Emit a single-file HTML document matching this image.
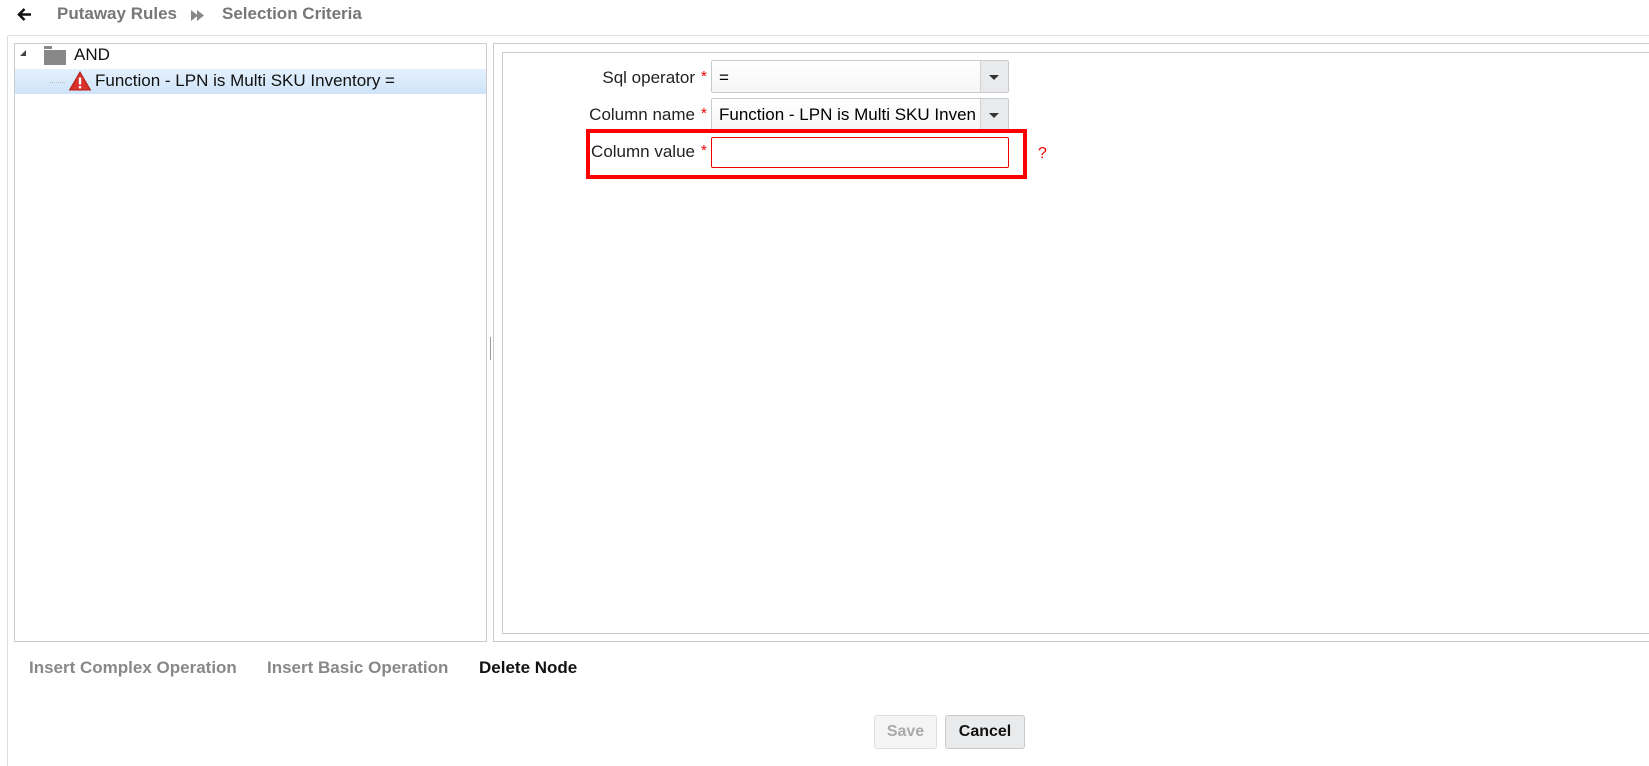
<!DOCTYPE html>
<html><head><style>
body{margin:0;width:1649px;height:764px;background:#fff;font-family:"Liberation Sans",sans-serif;position:relative;overflow:hidden}
.a{position:absolute}
.lbl{font-size:17px;color:#222;text-align:right;width:250px}
.st{color:#e00;font-size:15px}
.sel{border:1px solid #c8ccd0;border-radius:2px;background:linear-gradient(#fff,#f6f6f6);box-sizing:border-box}
.dd{position:absolute;right:0;top:0;bottom:0;width:27px;background:#e8eaec;border-left:1px solid #cfd2d5}
.dd:after{content:"";position:absolute;left:8px;top:14px;border:5px solid transparent;border-top:5px solid #333;border-bottom:0}
</style></head><body>
<div class="a" style="left:7px;top:36px;width:1px;height:730px;background:#ddd"></div>
<div class="a" style="left:8px;top:35px;width:1641px;height:1px;background:#ddd"></div>
<svg class="a" style="left:16px;top:6px" width="17" height="17"><path d="M15 8.5H3M8.5 3L3 8.5l5.5 5.5" stroke="#111" stroke-width="2.6" fill="none"/></svg>
<div class="a" style="left:57px;top:4px;font-size:17px;font-weight:bold;color:#777">Putaway Rules</div>
<svg class="a" style="left:190px;top:9px" width="15" height="13"><path d="M1 1l7 5.5-7 5.5zM7 1l7 5.5-7 5.5z" fill="#888"/></svg>
<div class="a" style="left:222px;top:4px;font-size:17px;font-weight:bold;color:#777">Selection Criteria</div>

<div class="a" style="left:14px;top:43px;width:471px;height:597px;border:1px solid #ccc"></div>
<svg class="a" style="left:19px;top:49px" width="8" height="8"><path d="M7 1V7H1z" fill="#444"/></svg>
<svg class="a" style="left:44px;top:45px" width="22" height="20"><path d="M0 1h8v3H0z" fill="#888"/><path d="M0 5h22v15H0z" fill="#888"/></svg>
<div class="a" style="left:74px;top:45px;font-size:17px;color:#111">AND</div>
<div class="a" style="left:15px;top:69px;width:471px;height:25px;background:linear-gradient(#e4f0fc,#cfe4f9)"></div>
<div class="a" style="left:50px;top:82px;width:15px;border-top:1px dotted #bbb"></div>
<svg class="a" style="left:69px;top:71px" width="22" height="20"><path d="M11 1L21.5 19H0.5z" fill="#d9322a" stroke="#b02018"/><path d="M11 6.5v7" stroke="#fff" stroke-width="2.4"/><circle cx="11" cy="16.2" r="1.3" fill="#fff"/></svg>
<div class="a" style="left:95px;top:71px;font-size:17px;color:#111;white-space:nowrap">Function - LPN is Multi SKU Inventory =</div>

<div class="a" style="left:490px;top:337px;width:1px;height:23px;background:#999"></div>
<div class="a" style="left:493px;top:43px;width:1190px;height:597px;border:1px solid #ccc"></div>
<div class="a" style="left:502px;top:52px;width:1180px;height:580px;border:1px solid #ccc"></div>

<div class="a lbl" style="left:445px;top:68px">Sql operator</div><div class="a st" style="left:701px;top:68px">*</div>
<div class="a sel" style="left:711px;top:60px;width:298px;height:33px"><span class="a" style="left:7px;top:7px;font-size:17px">=</span><div class="dd"></div></div>
<div class="a lbl" style="left:445px;top:105px">Column name</div><div class="a st" style="left:701px;top:105px">*</div>
<div class="a sel" style="left:711px;top:98px;width:298px;height:33px"><span class="a" style="left:7px;top:6px;font-size:17px;white-space:nowrap">Function - LPN is Multi SKU Inven</span><div class="dd"></div></div>
<div class="a lbl" style="left:445px;top:142px">Column value</div><div class="a st" style="left:701px;top:142px">*</div>
<div class="a" style="left:711px;top:137px;width:298px;height:31px;border:1px solid #e00;border-radius:2px;box-sizing:border-box"></div>
<div class="a" style="left:586px;top:129px;width:441px;height:50px;border:4px solid #f00;box-sizing:border-box"></div>
<div class="a" style="left:1038px;top:145px;font-size:16px;color:#e00">?</div>

<div class="a" style="left:29px;top:658px;font-size:17px;font-weight:bold;color:#888">Insert Complex Operation</div>
<div class="a" style="left:267px;top:658px;font-size:17px;font-weight:bold;color:#888">Insert Basic Operation</div>
<div class="a" style="left:479px;top:658px;font-size:17px;font-weight:bold;color:#111">Delete Node</div>

<div class="a" style="left:874px;top:715px;width:63px;height:34px;border:1px solid #ddd;border-radius:3px;background:#f5f5f5;box-sizing:border-box;text-align:center;line-height:32px;font-size:16px;font-weight:bold;color:#aaa">Save</div>
<div class="a" style="left:945px;top:715px;width:80px;height:34px;border:1px solid #c8c8c8;border-radius:3px;background:#e8eaec;box-sizing:border-box;text-align:center;line-height:32px;font-size:16px;font-weight:bold;color:#111">Cancel</div>
</body></html>
